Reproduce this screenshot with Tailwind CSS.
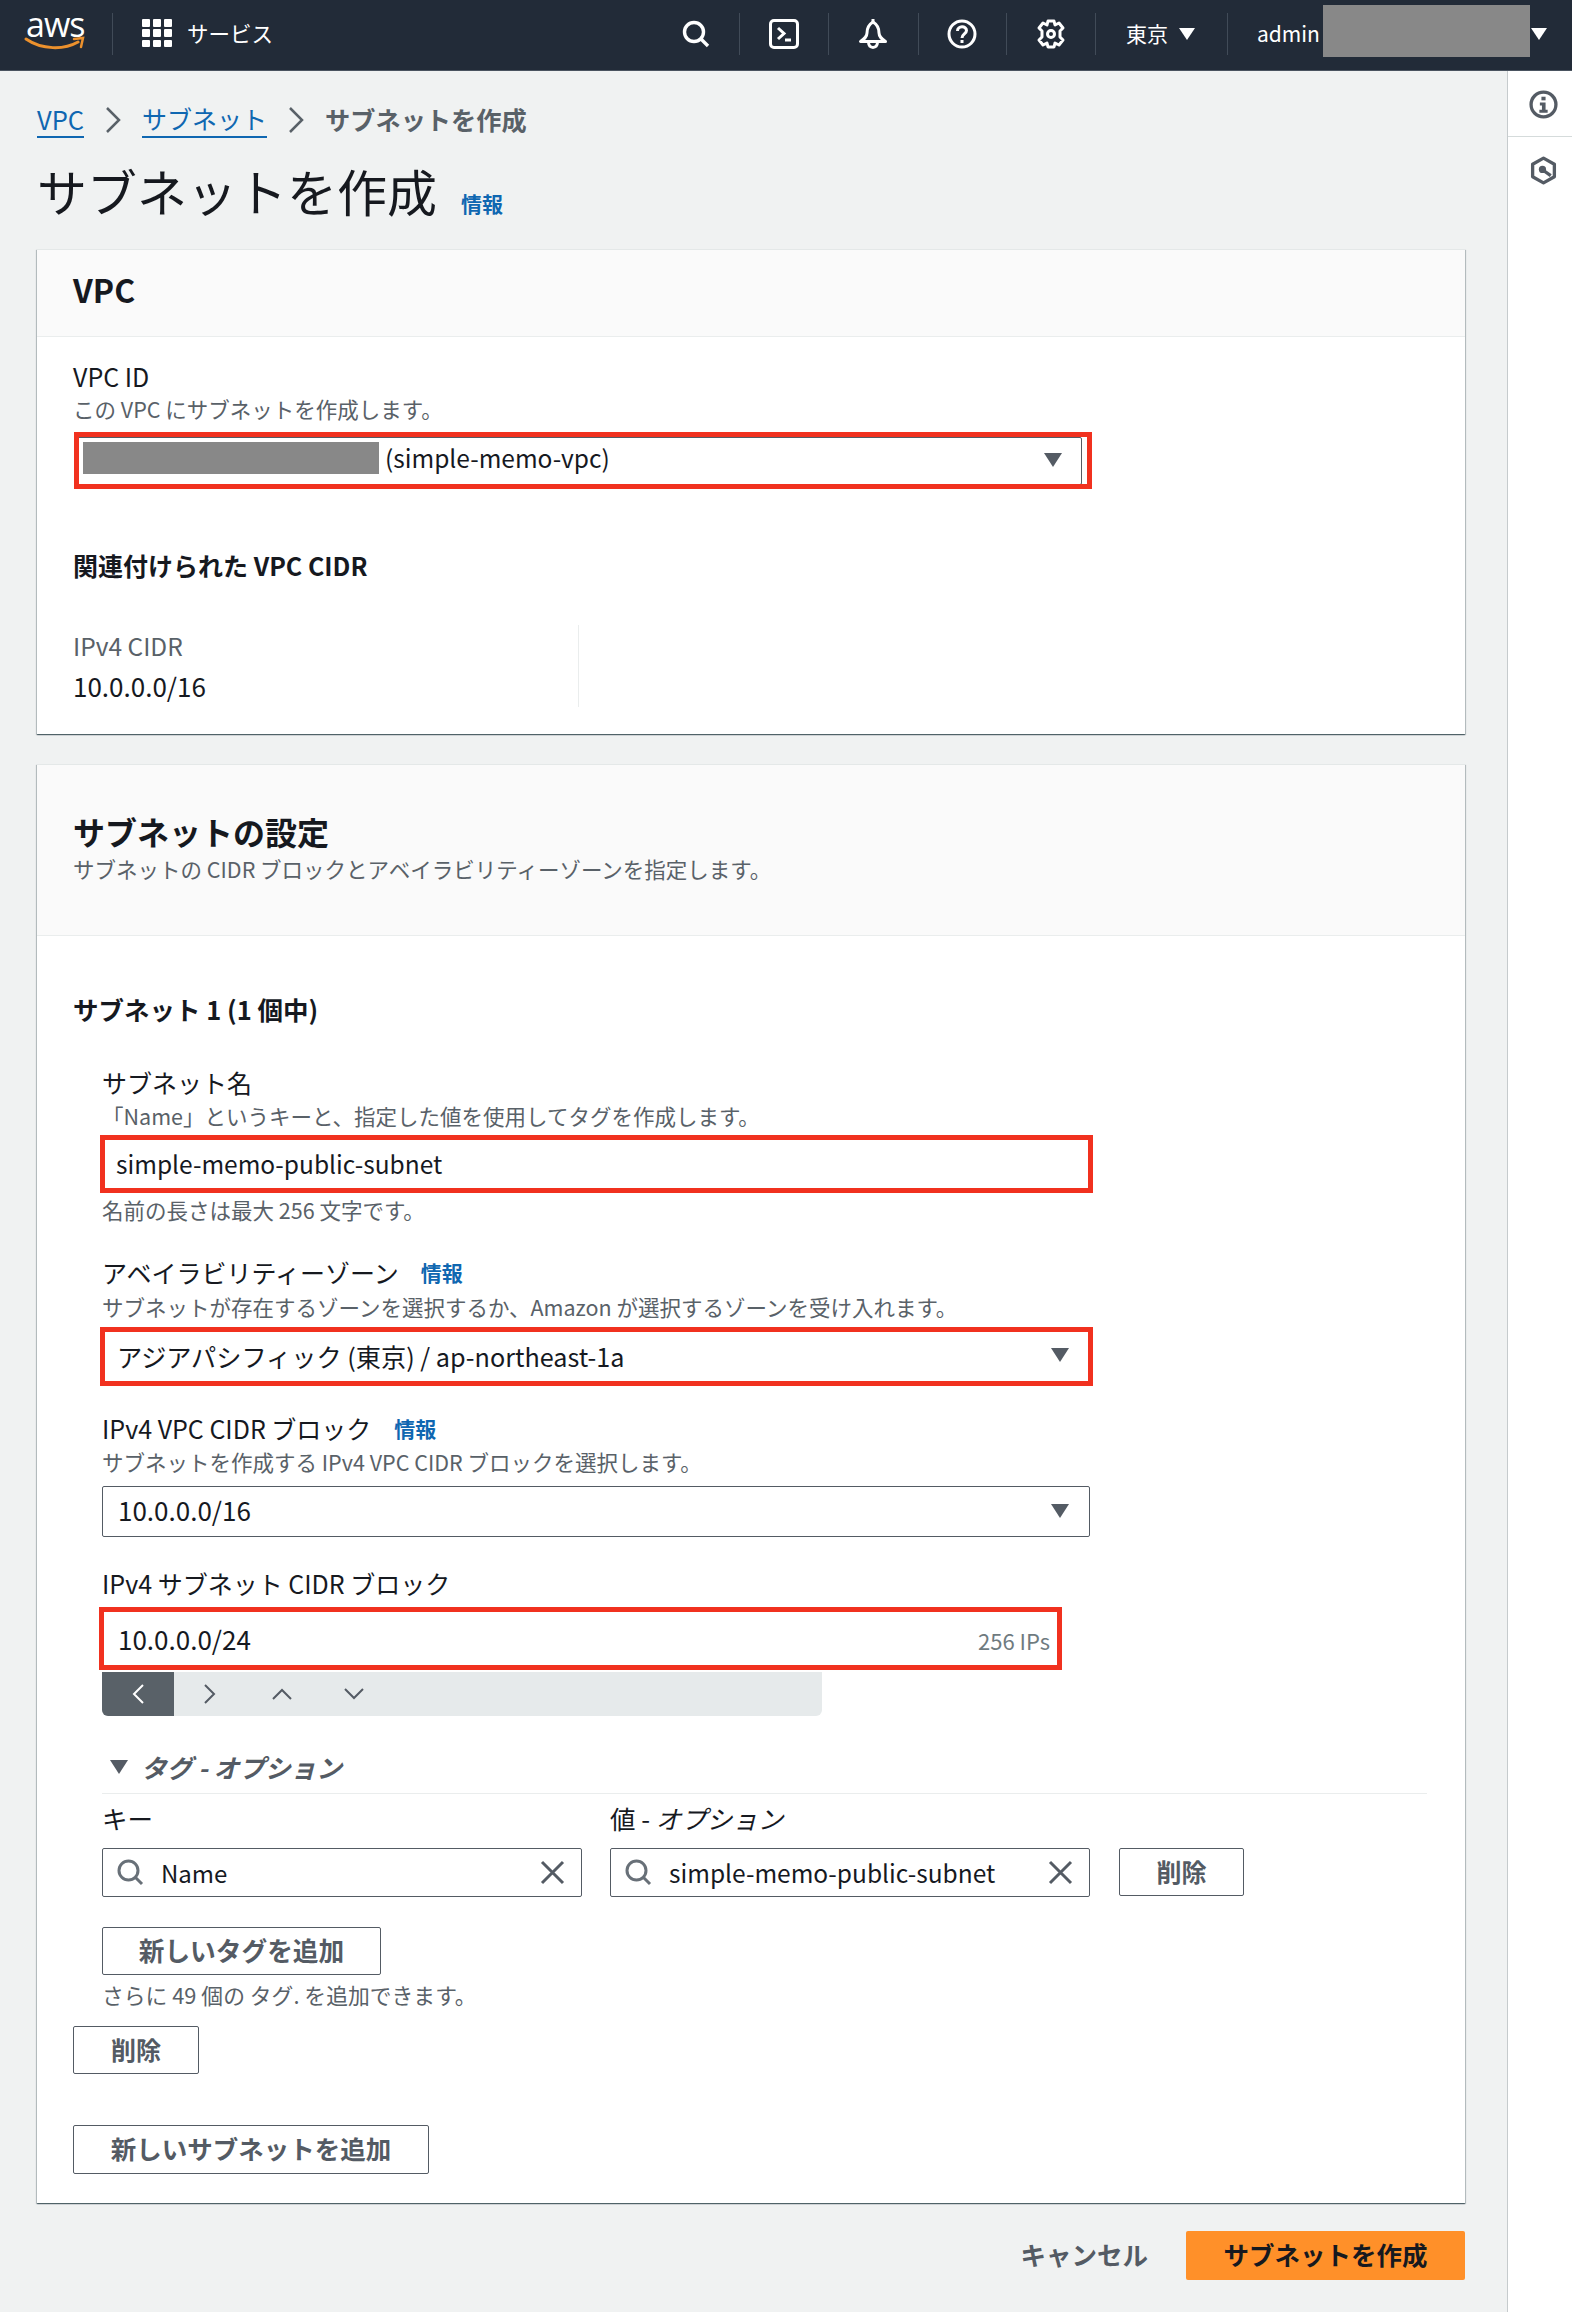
<!DOCTYPE html>
<html lang="ja">
<head>
  <meta charset="UTF-8" />
  <title>サブネットを作成</title>
  <script src="https://cdn.jsdelivr.net/npm/@tailwindcss/browser@4"></script>
</head>
<body class="bg-[#f0f2f2] text-[#16191f] font-['Noto_Sans_CJK_JP','Noto_Sans',sans-serif] w-[1572px] h-[2312px] overflow-hidden">

  <!-- top nav -->
  <header class="h-[71px] bg-[#222b38] border-b border-[#4a5460] flex items-center pb-[3px] text-white">
    <div class="relative w-[112px] h-[67px] shrink-0">
      <span class="absolute left-[26px] top-[4px] text-[34px] leading-[40px] font-['Open_Sans',sans-serif] tracking-[-1px]">aws</span>
      <svg class="absolute left-[24px] top-[36px]" width="62" height="16" viewBox="0 0 62 16" fill="none"><path d="M2 3C18 14 40 14 54 6" stroke="#ec912d" stroke-width="3" stroke-linecap="round"/><path d="M50 3L59 2L57 11" stroke="#ec912d" stroke-width="2.5" fill="none" stroke-linecap="round"/></svg>
    </div>
    <div class="w-px h-[42px] bg-[#414b58] shrink-0"></div>
    <svg class="ml-[29px] shrink-0" width="31" height="29" viewBox="0 0 31 29" fill="#fff"><rect x="0" y="0" width="8" height="8" rx="1"/><rect x="11" y="0" width="8" height="8" rx="1"/><rect x="22" y="0" width="8" height="8" rx="1"/><rect x="0" y="10" width="8" height="8" rx="1"/><rect x="11" y="10" width="8" height="8" rx="1"/><rect x="22" y="10" width="8" height="8" rx="1"/><rect x="0" y="21" width="8" height="7" rx="1"/><rect x="11" y="21" width="8" height="7" rx="1"/><rect x="22" y="21" width="8" height="7" rx="1"/></svg>
    <span class="ml-[14px] w-[496px] shrink-0 text-[21.5px] leading-[30px] pb-[2px]">サービス</span>
    <svg class="ml-[-1px] shrink-0" width="28" height="28" viewBox="0 0 28 28" fill="none" stroke="#fff" stroke-width="3.4"><circle cx="12" cy="12" r="9.5"/><path d="M18.5 18.5L26 26"/></svg>
    <div class="ml-[29px] w-px h-[42px] bg-[#414b58] shrink-0"></div>
    <svg class="ml-[29px] shrink-0" width="30" height="30" viewBox="0 0 30 30" fill="none" stroke="#fff" stroke-width="3"><rect x="1.5" y="1.5" width="27" height="27" rx="3.5"/><path d="M9 9L15 14.5L9 20"/><path d="M16 21H22"/></svg>
    <div class="ml-[29px] w-px h-[42px] bg-[#414b58] shrink-0"></div>
    <svg class="ml-[29px] shrink-0" width="30" height="30" viewBox="0 0 30 30" fill="none" stroke="#fff" stroke-width="3"><path d="M15 3C10 6 9 10 9 14C9 18 6 20 2.5 22.5H27.5C24 20 21 18 21 14C21 10 20 6 15 3Z" stroke-linejoin="round"/><path d="M15 0V3" /><path d="M10.5 23.5C11 30 19 30 19.5 23.5"/></svg>
    <div class="ml-[30px] w-px h-[42px] bg-[#414b58] shrink-0"></div>
    <svg class="ml-[28px] shrink-0" width="30" height="30" viewBox="0 0 30 30" fill="none" stroke="#fff" stroke-width="3"><circle cx="15" cy="15" r="13"/><path d="M10.5 12C10.5 6.5 19.5 6.5 19.5 11.5C19.5 15 15 15 15 19" /><path d="M15 21V24"/></svg>
    <div class="ml-[29px] w-px h-[42px] bg-[#414b58] shrink-0"></div>
    <svg class="ml-[29px] shrink-0" width="30" height="30" viewBox="0 0 30 30" fill="none" stroke="#fff" stroke-width="3"><path d="M12 2H18L19 6L23 4L27 9L24 12V18L27 21L23 26L19 24L18 28H12L11 24L7 26L3 21L6 18V12L3 9L7 4L11 6Z" stroke-linejoin="round"/><circle cx="15" cy="15" r="3.5"/></svg>
    <div class="ml-[29px] w-px h-[42px] bg-[#414b58] shrink-0"></div>
    <span class="ml-[30px] w-[44px] shrink-0 text-[21px] leading-[30px] pb-[2px]">東京</span>
    <span class="ml-[9px] w-0 h-0 shrink-0 border-x-[8px] border-x-transparent border-t-[12px] border-t-white"></span>
    <div class="ml-[32px] w-px h-[42px] bg-[#414b58] shrink-0"></div>
    <span class="ml-[29px] w-[66px] shrink-0 text-[21px] leading-[30px] pb-[2px]">admin</span>
    <div class="self-start mt-[5px] w-[207px] h-[52px] bg-[#888888] shrink-0"></div>
    <span class="ml-[1px] w-0 h-0 shrink-0 border-x-[8px] border-x-transparent border-t-[12px] border-t-white"></span>
  </header>

  <div class="flex h-[2241px]">
    <main class="w-[1507px] pl-[37px] shrink-0">
      <!-- breadcrumb -->
      <nav class="h-[40px] mt-[29px] flex items-center text-[25px] leading-[36px]">
        <a class="text-[#0f67b1] border-b-2 border-[#0f67b1] leading-[33px] pb-[1px] text-[25.5px]">VPC</a>
        <svg class="mx-[21px]" width="16" height="26" viewBox="0 0 16 26" fill="none" stroke="#596168" stroke-width="2.5"><path d="M2 1L14 13L2 25"/></svg>
        <a class="text-[#0f67b1] border-b-2 border-[#0f67b1] leading-[33px] pb-[1px]">サブネット</a>
        <svg class="mx-[21px]" width="16" height="26" viewBox="0 0 16 26" fill="none" stroke="#596168" stroke-width="2.5"><path d="M2 1L14 13L2 25"/></svg>
        <span class="text-[#596168] font-bold text-[25.2px] pb-[2px]">サブネットを作成</span>
      </nav>
      <div class="mt-[20px] h-[66px] flex items-center">
        <h1 class="text-[50px] leading-[66px] font-normal text-[#16191f] pb-[6px]">サブネットを作成</h1>
        <a class="ml-[24px] mt-[20px] text-[21px] font-bold text-[#0f67b1] leading-[30px]">情報</a>
      </div>

      <!-- VPC card -->
      <section class="mt-[23px] w-[1428px] h-[485px] bg-white border-t border-[#e4e8e8] shadow-[0_1px_1px_rgba(0,28,36,0.5),1px_1px_1px_rgba(0,28,36,0.18),-1px_1px_1px_rgba(0,28,36,0.18)]">
        <div class="h-[87px] bg-[#fafafa] border-b border-[#eaeded] pl-[36px] pb-[8px] flex items-center">
          <h2 class="text-[32px] leading-[40px] font-bold">VPC</h2>
        </div>
        <div class="pl-[36px] pt-[24px]">
          <div class="text-[25px] leading-[30px]">VPC ID</div>
          <div class="mt-[4px] text-[21.5px] leading-[28px] text-[#596168]">この VPC にサブネットを作成します。</div>
          <div class="relative mt-[9px] ml-[1px] w-[1018px] h-[57px]">
            <div class="absolute left-0 top-[5px] w-[1008px] h-[48px] border border-[#545b64] rounded-[2px]"></div>
            <div class="absolute inset-0 border-[5px] border-[#f1311f]"></div>
            <div class="relative h-full flex items-center pl-[9px] pb-[6px] text-[24.5px] leading-[30px]">
              <span class="w-[296px] h-[32px] bg-[#888888] mr-[6px]"></span>(simple-memo-vpc)
            </div>
            <span class="absolute left-[970px] top-[21px] w-0 h-0 border-x-[9px] border-x-transparent border-t-[14px] border-t-[#545b64]"></span>
          </div>
          <h3 class="mt-[60px] text-[25px] leading-[32px] font-bold">関連付けられた VPC CIDR</h3>
          <div class="mt-[44px] flex h-[82px] w-[506px] border-r border-[#eaeded] flex-col pt-[6px]">
            <div class="text-[24.5px] leading-[30px] text-[#596168]">IPv4 CIDR</div>
            <div class="mt-[10px] text-[26px] leading-[30px]">10.0.0.0/16</div>
          </div>
        </div>
      </section>

      <!-- subnet settings card -->
      <section class="mt-[30px] w-[1428px] h-[1439px] bg-white border-t border-[#e4e8e8] shadow-[0_1px_1px_rgba(0,28,36,0.5),1px_1px_1px_rgba(0,28,36,0.18),-1px_1px_1px_rgba(0,28,36,0.18)]">
        <div class="h-[171px] bg-[#fafafa] border-b border-[#eaeded] pl-[36px] pt-[46px]">
          <h2 class="text-[32px] leading-[40px] font-bold">サブネットの設定</h2>
          <p class="mt-[4px] text-[21.5px] leading-[28px] text-[#596168]">サブネットの CIDR ブロックとアベイラビリティーゾーンを指定します。</p>
        </div>
        <div class="pl-[36px] pt-[57px]">
          <h3 class="text-[25.5px] leading-[32px] font-bold">サブネット 1 (1 個中)</h3>
          <div class="pl-[29px]">
            <div class="mt-[42px] text-[25px] leading-[30px]">サブネット名</div>
            <div class="mt-[5px] text-[21.5px] leading-[28px] text-[#596168]">「Name」というキーと、指定した値を使用してタグを作成します。</div>
            <div class="mt-[5px] -ml-[2px] w-[993px] h-[58px] border-[5px] border-[#f1311f] flex items-center pl-[11px] text-[24.5px] leading-[30px]">simple-memo-public-subnet</div>
            <div class="mt-[3px] text-[21.5px] leading-[28px] text-[#596168]">名前の長さは最大 256 文字です。</div>

            <div class="mt-[33px] text-[25px] leading-[30px] flex">アベイラビリティーゾーン<a class="ml-[22px] text-[21px] font-bold text-[#0f67b1]">情報</a></div>
            <div class="mt-[6px] text-[21.5px] leading-[28px] text-[#596168]">サブネットが存在するゾーンを選択するか、Amazon が選択するゾーンを受け入れます。</div>
            <div class="relative mt-[6px] -ml-[2px] w-[993px] h-[59px] border-[5px] border-[#f1311f] flex items-center pl-[12px] pb-[2px] text-[25.2px] leading-[30px]">アジアパシフィック (東京) / ap-northeast-1a
              <span class="absolute right-[19px] top-[16px] w-0 h-0 border-x-[9px] border-x-transparent border-t-[14px] border-t-[#545b64]"></span>
            </div>

            <div class="mt-[27px] text-[25px] leading-[30px] flex">IPv4 VPC CIDR ブロック<a class="ml-[23px] text-[21px] font-bold text-[#0f67b1]">情報</a></div>
            <div class="mt-[5px] text-[21.5px] leading-[28px] text-[#596168]">サブネットを作成する IPv4 VPC CIDR ブロックを選択します。</div>
            <div class="relative mt-[10px] w-[988px] h-[51px] border border-[#545b64] rounded-[2px] flex items-center pl-[15px] pb-[3px] text-[26px] leading-[30px]">10.0.0.0/16
              <span class="absolute right-[20px] top-[17px] w-0 h-0 border-x-[9px] border-x-transparent border-t-[14px] border-t-[#545b64]"></span>
            </div>

            <div class="mt-[31px] text-[25px] leading-[30px]">IPv4 サブネット CIDR ブロック</div>
            <div class="relative mt-[9px] -ml-[3px] w-[963px] h-[63px] border-[5px] border-[#f1311f] flex items-center pl-[14px] text-[26px] leading-[30px]">10.0.0.0/24
              <span class="absolute right-[7px] top-[14px] text-[22px] leading-[28px] text-[#6f7b7f]">256 IPs</span>
            </div>
            <div class="mt-[2px] w-[720px] h-[44px] bg-[#e6eaeb] rounded-b-[6px] flex items-center overflow-hidden">
              <span class="w-[72px] h-full bg-[#596168] flex items-center justify-center"><svg width="14" height="22" viewBox="0 0 14 22" fill="none" stroke="#fff" stroke-width="2"><path d="M12 2L3 11L12 20"/></svg></span>
              <span class="w-[72px] h-full flex items-center justify-center"><svg width="14" height="22" viewBox="0 0 14 22" fill="none" stroke="#545b64" stroke-width="2"><path d="M2 2L11 11L2 20"/></svg></span>
              <span class="w-[72px] h-full flex items-center justify-center"><svg width="22" height="14" viewBox="0 0 22 14" fill="none" stroke="#545b64" stroke-width="2"><path d="M2 12L11 3L20 12"/></svg></span>
              <span class="w-[72px] h-full flex items-center justify-center"><svg width="22" height="14" viewBox="0 0 22 14" fill="none" stroke="#545b64" stroke-width="2"><path d="M2 2L11 11L20 2"/></svg></span>
            </div>

            <div class="mt-[36px] ml-[8px] h-[30px] flex items-center text-[25.7px] leading-[30px] font-bold italic text-[#545b64]">
              <span class="w-0 h-0 mr-[13px] border-x-[9px] border-x-transparent border-t-[14px] border-t-[#545b64]"></span>タグ - オプション
            </div>
            <div class="mt-[11px] w-[1325px] h-px bg-[#eaeded]"></div>

            <div class="mt-[9px] flex gap-[28px] text-[25.5px] leading-[30px]">
              <div class="w-[480px]">キー</div>
              <div class="w-[480px]">値 - <i>オプション</i></div>
            </div>
            <div class="mt-[15px] flex items-start">
              <div class="w-[480px] h-[49px] border border-[#545b64] rounded-[2px] flex items-center pl-[14px] pr-[16px] text-[24px] leading-[30px]">
                <svg class="mr-[17px] shrink-0" width="27" height="27" viewBox="0 0 27 27" fill="none" stroke="#687078" stroke-width="3"><circle cx="11.5" cy="11.5" r="9.5"/><path d="M18 18L25 25"/></svg>
                <span class="grow">Name</span>
                <svg class="shrink-0" width="25" height="25" viewBox="0 0 25 25" fill="none" stroke="#545b64" stroke-width="3"><path d="M2 2L23 23M23 2L2 23"/></svg>
              </div>
              <div class="ml-[28px] w-[480px] h-[49px] border border-[#545b64] rounded-[2px] flex items-center pl-[14px] pr-[16px] text-[24.5px] leading-[30px]">
                <svg class="mr-[17px] shrink-0" width="27" height="27" viewBox="0 0 27 27" fill="none" stroke="#687078" stroke-width="3"><circle cx="11.5" cy="11.5" r="9.5"/><path d="M18 18L25 25"/></svg>
                <span class="grow">simple-memo-public-subnet</span>
                <svg class="shrink-0" width="25" height="25" viewBox="0 0 25 25" fill="none" stroke="#545b64" stroke-width="3"><path d="M2 2L23 23M23 2L2 23"/></svg>
              </div>
              <button class="ml-[29px] w-[125px] h-[48px] bg-white border border-[#545b64] rounded-[2px] text-[25px] leading-[30px] font-bold text-[#545b64] pb-[2px]">削除</button>
            </div>
            <button class="block mt-[30px] w-[279px] h-[48px] bg-white border border-[#545b64] rounded-[2px] text-[25.7px] leading-[30px] font-bold text-[#545b64] pb-[2px]">新しいタグを追加</button>
            <div class="mt-[6px] text-[21.8px] leading-[28px] text-[#596168]">さらに 49 個の タグ. を追加できます。</div>
          </div>
          <button class="block mt-[17px] w-[126px] h-[48px] bg-white border border-[#545b64] rounded-[2px] text-[25px] leading-[30px] font-bold text-[#545b64] pb-[2px]">削除</button>
          <button class="block mt-[51px] w-[356px] h-[49px] bg-white border border-[#545b64] rounded-[2px] text-[25.5px] leading-[30px] font-bold text-[#545b64] pb-[4px]">新しいサブネットを追加</button>
        </div>
      </section>

      <!-- footer actions -->
      <div class="mt-[28px] w-[1428px] flex items-center justify-end">
        <a class="text-[25.5px] leading-[30px] font-bold text-[#545b64] mr-[38px] pb-[3px]">キャンセル</a>
        <button class="w-[279px] h-[49px] bg-[#ff9029] rounded-[2px] text-[25.5px] leading-[30px] font-bold text-[#16191f] pb-[3px]">サブネットを作成</button>
      </div>
    </main>

    <!-- right rail -->
    <aside class="w-[65px] bg-white border-l border-[#c6cbcd] shrink-0">
      <div class="h-[66px] border-b border-[#d5dbdb] flex items-center justify-center pl-[6px] pt-[2px]">
        <svg width="29" height="29" viewBox="0 0 28 28"><circle cx="14" cy="14" r="12" fill="none" stroke="#545b64" stroke-width="3.2"/><rect x="12" y="6.5" width="4" height="3.5" fill="#545b64"/><path d="M10.5 12H16V19H18V22H10V19H12.5V15H10.5Z" fill="#545b64"/></svg>
      </div>
      <div class="mt-[19px] flex justify-center pl-[6px]">
        <svg width="27" height="29" viewBox="0 0 26 28" fill="none"><path d="M13 2L23.5 8V20L13 26L2.5 20V8Z" stroke="#545b64" stroke-width="3.2" stroke-linejoin="round"/><circle cx="12" cy="13" r="3.5" fill="#545b64"/><path d="M13 14L20 19" stroke="#545b64" stroke-width="3.2"/></svg>
      </div>
    </aside>
  </div>
</body>
</html>
